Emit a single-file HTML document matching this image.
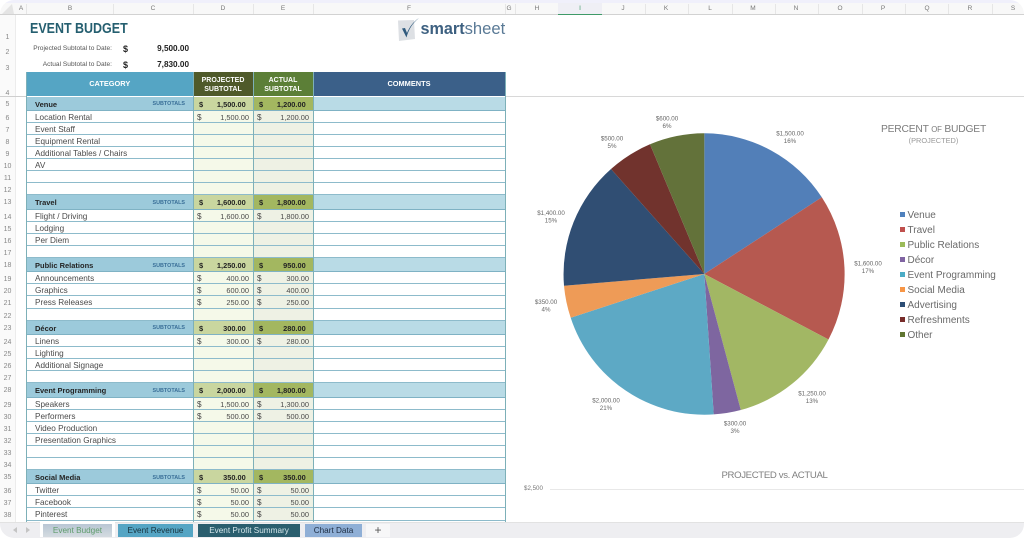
<!DOCTYPE html>
<html><head><meta charset="utf-8"><style>
html,body{margin:0;padding:0;background:#fff}
body{width:1024px;height:538px;overflow:hidden;font-family:"Liberation Sans",sans-serif}
#f{position:absolute;left:0;top:0;width:1024px;height:538px;filter:blur(.35px)}
#w{position:absolute;left:0;top:0;width:1024px;height:538px;background:#fff;border-radius:14px;overflow:hidden}
.a{position:absolute;white-space:nowrap}
.ch{position:absolute;top:3px;height:12px;line-height:12px;font-size:6.5px;color:#777;text-align:center;transform:translateX(-50%)}
.sp{position:absolute;top:4px;height:10px;width:1px;background:#e6e6e6}
.n{position:absolute;left:0;width:15px;text-align:center;font-size:7px;color:#888}
#rows{position:absolute;left:0;top:96.5px;width:505.5px}
.r{display:flex;height:12.02px;font-size:8.2px;color:#4a4a4a;line-height:13.4px}
.r>div{box-sizing:border-box;border-bottom:1px solid #8dbbcb;height:100%;position:relative}
.r>.g{width:15px;border:0;text-align:center;font-size:7px;font-weight:normal;color:#888;line-height:15px;background:#fafafa}
.r>.x{width:11.5px;border:0}
.r>.c{width:166.5px;padding-left:8.5px;background:#fff}
.r>.d{width:60px;background:#f5f9e9}
.r>.e{width:60px;background:#eef1e4}
.r>.o{width:192px;background:#fff}
.r i{position:absolute;left:4px;top:0;font-style:normal}
.r u{position:absolute;right:4px;top:0;text-decoration:none;font-size:7.4px}
.s{height:14.6px;font-weight:bold;color:#242424;line-height:15.4px;font-size:7.5px}
.s>div{border-bottom:1px solid #7fb2c4}
.s>.c{background:#9ccadb}
.s>.d{background:#c9d69f}
.s>.e{background:#a3b760}
.s>.o{background:#b9dbe6}
.s i{left:6px}.s u{right:7.3px}
.s em{position:absolute;right:8px;top:.8px;font-style:normal;font-size:5.4px;color:#3a6f98}
.v{position:absolute;top:72px;height:450px;width:1px;background:#7db0b8}
.hd{position:absolute;top:72px;height:24px;color:#fff;font-weight:bold;text-align:center;font-size:7.4px;box-sizing:border-box}
.t{position:absolute;top:524px;height:13px;line-height:13px;text-align:center;font-size:8.2px}
.l{position:absolute;left:907.5px;font-size:10px;color:#6a6a6a;height:12px;line-height:12px}
.q{position:absolute;left:900px;width:5px;height:5px}
svg text{font-family:"Liberation Sans",sans-serif;font-size:6.2px;fill:#666;text-anchor:middle}
</style></head><body><div id="f"><div id="w">
<div class="a" style="left:0;top:0;width:1024px;height:3px;background:#f0f0fb"></div>
<div class="a" style="left:0;top:3px;width:1024px;height:11px;background:#f8f8f8"></div>
<div class="a" style="left:0;top:14px;width:1024px;height:1px;background:#d2d2d2"></div>
<div class="a" style="left:558px;top:3px;width:44px;height:11px;background:#efeff5"></div>
<div class="a" style="left:558px;top:14px;width:44px;height:1px;background:#3f9a68"></div>
<svg class="a" style="left:0;top:0" width="16" height="15"><path d="M2 14 L12 4 L14 14Z" fill="#e4e4e4"/></svg>
<span class="ch" style="left:21px">A</span><span class="ch" style="left:70px">B</span><span class="ch" style="left:153px">C</span><span class="ch" style="left:223px">D</span><span class="ch" style="left:283px">E</span><span class="ch" style="left:409px">F</span><span class="ch" style="left:509px">G</span><span class="ch" style="left:537px">H</span><span class="ch" style="left:580px;color:#3f9a68">I</span><span class="ch" style="left:623px">J</span><span class="ch" style="left:666px">K</span><span class="ch" style="left:710px">L</span><span class="ch" style="left:753px">M</span><span class="ch" style="left:796px">N</span><span class="ch" style="left:840px">O</span><span class="ch" style="left:883px">P</span><span class="ch" style="left:927px">Q</span><span class="ch" style="left:970px">R</span><span class="ch" style="left:1013px">S</span>
<span class="sp" style="left:26px"></span><span class="sp" style="left:113px"></span><span class="sp" style="left:193px"></span><span class="sp" style="left:253px"></span><span class="sp" style="left:313px"></span><span class="sp" style="left:505px"></span><span class="sp" style="left:515px"></span><span class="sp" style="left:645px"></span><span class="sp" style="left:688px"></span><span class="sp" style="left:732px"></span><span class="sp" style="left:775px"></span><span class="sp" style="left:818px"></span><span class="sp" style="left:862px"></span><span class="sp" style="left:905px"></span><span class="sp" style="left:948px"></span><span class="sp" style="left:992px"></span>
<div class="a" style="left:0;top:15px;width:15px;height:507px;background:#fafafa;border-right:1px solid #ececec"></div>
<span class="n" style="top:33.500px">1</span><span class="n" style="top:48.500px">2</span><span class="n" style="top:64.500px">3</span><span class="n" style="top:89.500px">4</span>

<div class="a" style="left:30px;top:20px;font-size:14.500px;font-weight:bold;color:#255f70;line-height:18px;transform-origin:0 50%;transform:scaleX(.86)">EVENT BUDGET</div>
<div class="a" style="right:912px;top:45px;font-size:6.600px;color:#555;line-height:8px">Projected Subtotal to Date:</div>
<div class="a" style="right:912px;top:61px;font-size:6.600px;color:#555;line-height:8px">Actual Subtotal to Date:</div>
<div class="a" style="left:123px;top:44px;font-size:9px;font-weight:bold;color:#222;line-height:10px">$</div>
<div class="a" style="left:123px;top:60px;font-size:9px;font-weight:bold;color:#222;line-height:10px">$</div>
<div class="a" style="right:835px;top:44px;font-size:8.200px;font-weight:bold;color:#222;line-height:10px">9,500.00</div>
<div class="a" style="right:835px;top:60px;font-size:8.200px;font-weight:bold;color:#222;line-height:10px">7,830.00</div>

<svg class="a" style="left:396px;top:15px" width="26" height="28" viewBox="0 0 26 28"><path d="M2 5.500 L18 5 L19 24 L3 26Z" fill="#dde0e4"/><path d="M6 13.500 L10.500 22.500 C12.500 15 16 8.500 23 3 C17 7 13.500 12 11 18 L9 13Z" fill="#2f5a7d"/></svg>
<div class="a" style="left:420.500px;top:16px;font-size:16.600px;line-height:26px;color:#5a7a96"><span style="color:#3d6080;font-weight:bold;font-size:16.200px">smart</span>sheet</div>

<div class="hd" style="left:26.500px;width:166.500px;background:#55a5c4;line-height:23px">CATEGORY</div>
<div class="hd" style="left:193px;width:60px;background:#4f5a2a;padding-top:3.500px;line-height:9.500px;font-size:7px">PROJECTED<br>SUBTOTAL</div>
<div class="hd" style="left:253px;width:60px;background:#5c7f37;padding-top:3.500px;line-height:9.500px;font-size:7px">ACTUAL<br>SUBTOTAL</div>
<div class="hd" style="left:313px;width:192px;background:#3b6089;line-height:23px">COMMENTS</div>

<div id="rows">
<div class="r s"><div class="g">5</div><div class="x"></div><div class="c">Venue<em>SUBTOTALS</em></div><div class="d"><i>$</i><u>1,500.00</u></div><div class="e"><i>$</i><u>1,200.00</u></div><div class="o"></div></div>
<div class="r"><div class="g">6</div><div class="x"></div><div class="c">Location Rental</div><div class="d"><i>$</i><u>1,500.00</u></div><div class="e"><i>$</i><u>1,200.00</u></div><div class="o"></div></div>
<div class="r"><div class="g">7</div><div class="x"></div><div class="c">Event Staff</div><div class="d"></div><div class="e"></div><div class="o"></div></div>
<div class="r"><div class="g">8</div><div class="x"></div><div class="c">Equipment Rental</div><div class="d"></div><div class="e"></div><div class="o"></div></div>
<div class="r"><div class="g">9</div><div class="x"></div><div class="c">Additional Tables / Chairs</div><div class="d"></div><div class="e"></div><div class="o"></div></div>
<div class="r"><div class="g">10</div><div class="x"></div><div class="c">AV</div><div class="d"></div><div class="e"></div><div class="o"></div></div>
<div class="r"><div class="g">11</div><div class="x"></div><div class="c"></div><div class="d"></div><div class="e"></div><div class="o"></div></div>
<div class="r"><div class="g">12</div><div class="x"></div><div class="c"></div><div class="d"></div><div class="e"></div><div class="o"></div></div>
<div class="r s"><div class="g">13</div><div class="x"></div><div class="c">Travel<em>SUBTOTALS</em></div><div class="d"><i>$</i><u>1,600.00</u></div><div class="e"><i>$</i><u>1,800.00</u></div><div class="o"></div></div>
<div class="r"><div class="g">14</div><div class="x"></div><div class="c">Flight / Driving</div><div class="d"><i>$</i><u>1,600.00</u></div><div class="e"><i>$</i><u>1,800.00</u></div><div class="o"></div></div>
<div class="r"><div class="g">15</div><div class="x"></div><div class="c">Lodging</div><div class="d"></div><div class="e"></div><div class="o"></div></div>
<div class="r"><div class="g">16</div><div class="x"></div><div class="c">Per Diem</div><div class="d"></div><div class="e"></div><div class="o"></div></div>
<div class="r"><div class="g">17</div><div class="x"></div><div class="c"></div><div class="d"></div><div class="e"></div><div class="o"></div></div>
<div class="r s"><div class="g">18</div><div class="x"></div><div class="c">Public Relations<em>SUBTOTALS</em></div><div class="d"><i>$</i><u>1,250.00</u></div><div class="e"><i>$</i><u>950.00</u></div><div class="o"></div></div>
<div class="r"><div class="g">19</div><div class="x"></div><div class="c">Announcements</div><div class="d"><i>$</i><u>400.00</u></div><div class="e"><i>$</i><u>300.00</u></div><div class="o"></div></div>
<div class="r"><div class="g">20</div><div class="x"></div><div class="c">Graphics</div><div class="d"><i>$</i><u>600.00</u></div><div class="e"><i>$</i><u>400.00</u></div><div class="o"></div></div>
<div class="r"><div class="g">21</div><div class="x"></div><div class="c">Press Releases</div><div class="d"><i>$</i><u>250.00</u></div><div class="e"><i>$</i><u>250.00</u></div><div class="o"></div></div>
<div class="r"><div class="g">22</div><div class="x"></div><div class="c"></div><div class="d"></div><div class="e"></div><div class="o"></div></div>
<div class="r s"><div class="g">23</div><div class="x"></div><div class="c">Décor<em>SUBTOTALS</em></div><div class="d"><i>$</i><u>300.00</u></div><div class="e"><i>$</i><u>280.00</u></div><div class="o"></div></div>
<div class="r"><div class="g">24</div><div class="x"></div><div class="c">Linens</div><div class="d"><i>$</i><u>300.00</u></div><div class="e"><i>$</i><u>280.00</u></div><div class="o"></div></div>
<div class="r"><div class="g">25</div><div class="x"></div><div class="c">Lighting</div><div class="d"></div><div class="e"></div><div class="o"></div></div>
<div class="r"><div class="g">26</div><div class="x"></div><div class="c">Additional Signage</div><div class="d"></div><div class="e"></div><div class="o"></div></div>
<div class="r"><div class="g">27</div><div class="x"></div><div class="c"></div><div class="d"></div><div class="e"></div><div class="o"></div></div>
<div class="r s"><div class="g">28</div><div class="x"></div><div class="c">Event Programming<em>SUBTOTALS</em></div><div class="d"><i>$</i><u>2,000.00</u></div><div class="e"><i>$</i><u>1,800.00</u></div><div class="o"></div></div>
<div class="r"><div class="g">29</div><div class="x"></div><div class="c">Speakers</div><div class="d"><i>$</i><u>1,500.00</u></div><div class="e"><i>$</i><u>1,300.00</u></div><div class="o"></div></div>
<div class="r"><div class="g">30</div><div class="x"></div><div class="c">Performers</div><div class="d"><i>$</i><u>500.00</u></div><div class="e"><i>$</i><u>500.00</u></div><div class="o"></div></div>
<div class="r"><div class="g">31</div><div class="x"></div><div class="c">Video Production</div><div class="d"></div><div class="e"></div><div class="o"></div></div>
<div class="r"><div class="g">32</div><div class="x"></div><div class="c">Presentation Graphics</div><div class="d"></div><div class="e"></div><div class="o"></div></div>
<div class="r"><div class="g">33</div><div class="x"></div><div class="c"></div><div class="d"></div><div class="e"></div><div class="o"></div></div>
<div class="r"><div class="g">34</div><div class="x"></div><div class="c"></div><div class="d"></div><div class="e"></div><div class="o"></div></div>
<div class="r s"><div class="g">35</div><div class="x"></div><div class="c">Social Media<em>SUBTOTALS</em></div><div class="d"><i>$</i><u>350.00</u></div><div class="e"><i>$</i><u>350.00</u></div><div class="o"></div></div>
<div class="r"><div class="g">36</div><div class="x"></div><div class="c">Twitter</div><div class="d"><i>$</i><u>50.00</u></div><div class="e"><i>$</i><u>50.00</u></div><div class="o"></div></div>
<div class="r"><div class="g">37</div><div class="x"></div><div class="c">Facebook</div><div class="d"><i>$</i><u>50.00</u></div><div class="e"><i>$</i><u>50.00</u></div><div class="o"></div></div>
<div class="r"><div class="g">38</div><div class="x"></div><div class="c">Pinterest</div><div class="d"><i>$</i><u>50.00</u></div><div class="e"><i>$</i><u>50.00</u></div><div class="o"></div></div>
</div>
<div class="v" style="left:26px"></div><div class="v" style="left:193px"></div><div class="v" style="left:253px"></div><div class="v" style="left:313px"></div><div class="v" style="left:505px"></div>
<div class="a" style="left:0;top:96px;width:26px;height:1px;background:#cfcfcf"></div>
<div class="a" style="left:506px;top:96px;width:518px;height:1px;background:#d8d8d8"></div>

<svg class="a" style="left:0;top:0" width="1024" height="538">
<path d="M704.300 274V133.300A140.700 140.700 0 0 1 821.800 197.300Z" fill="#527fb8"/>
<path d="M704.300 274L821.800 197.300A140.700 140.700 0 0 1 828.500 339.500Z" fill="#b65950"/>
<path d="M704.300 274L828.500 339.500A140.700 140.700 0 0 1 740.800 410Z" fill="#a2b764"/>
<path d="M704.300 274L740.800 410A140.700 140.700 0 0 1 713.700 414.400Z" fill="#7e66a0"/>
<path d="M704.300 274L713.700 414.400A140.700 140.700 0 0 1 570.700 317.700Z" fill="#5da9c5"/>
<path d="M704.300 274L570.700 317.700A140.700 140.700 0 0 1 564 285.700Z" fill="#ee9b57"/>
<path d="M704.300 274L564 285.700A140.700 140.700 0 0 1 611 169Z" fill="#304e73"/>
<path d="M704.300 274L611 169A140.700 140.700 0 0 1 650 144.300Z" fill="#71332d"/>
<path d="M704.300 274L650 144.300A140.700 140.700 0 0 1 704.300 133.300Z" fill="#63723a"/>
<text x="790" y="135.500">$1,500.00</text><text x="790" y="143">16%</text>
<text x="868" y="265.500">$1,600.00</text><text x="868" y="273">17%</text>
<text x="812" y="395.500">$1,250.00</text><text x="812" y="403">13%</text>
<text x="735" y="425.500">$300.00</text><text x="735" y="433">3%</text>
<text x="606" y="402.500">$2,000.00</text><text x="606" y="410">21%</text>
<text x="546" y="304">$350.00</text><text x="546" y="311.500">4%</text>
<text x="551" y="215">$1,400.00</text><text x="551" y="222.500">15%</text>
<text x="612" y="140.500">$500.00</text><text x="612" y="148">5%</text>
<text x="667" y="120.500">$600.00</text><text x="667" y="128">6%</text>
</svg>

<div class="a" style="left:933.500px;top:122.500px;transform:translateX(-50%);font-size:10.300px;line-height:13px;color:#7c7c7c;letter-spacing:-.2px">PERCENT <span style="font-size:7.800px">OF</span> BUDGET</div>
<div class="a" style="left:933.500px;top:135.500px;transform:translateX(-50%);font-size:7.400px;line-height:10px;color:#999">(PROJECTED)</div>
<i class="q" style="top:211.700px;background:#4f81bd"></i><span class="l" style="top:209.500px">Venue</span>
<i class="q" style="top:226.700px;background:#c0504d"></i><span class="l" style="top:224.500px">Travel</span>
<i class="q" style="top:241.700px;background:#9bbb59"></i><span class="l" style="top:239.500px">Public Relations</span>
<i class="q" style="top:256.700px;background:#8064a2"></i><span class="l" style="top:254.500px">Décor</span>
<i class="q" style="top:271.700px;background:#4bacc6"></i><span class="l" style="top:269.500px">Event Programming</span>
<i class="q" style="top:286.700px;background:#f79646"></i><span class="l" style="top:284.500px">Social Media</span>
<i class="q" style="top:301.700px;background:#2c4d75"></i><span class="l" style="top:299.500px">Advertising</span>
<i class="q" style="top:316.700px;background:#772c2a"></i><span class="l" style="top:314.500px">Refreshments</span>
<i class="q" style="top:331.700px;background:#5f7530"></i><span class="l" style="top:329.500px">Other</span>

<div class="a" style="left:774.500px;top:469.500px;transform:translateX(-50%);font-size:9.600px;line-height:12px;color:#808080;letter-spacing:-.35px">PROJECTED vs. ACTUAL</div>
<div class="a" style="left:524px;top:485px;font-size:6.200px;line-height:8px;color:#777">$2,500</div>
<div class="a" style="left:550px;top:489px;width:474px;height:1px;background:#e8e8e8"></div>

<div class="a" style="left:0;top:522px;width:1024px;height:16px;background:#eeeef1;border-top:1px solid #e2e2e2;box-sizing:border-box"></div>
<div class="a" style="left:13px;top:527px;width:0;height:0;border:3.500px solid transparent;border-right:4px solid #c4c4c4;border-left:0"></div>
<div class="a" style="left:26px;top:527px;width:0;height:0;border:3.500px solid transparent;border-left:4px solid #c4c4c4;border-right:0"></div>
<div class="a" style="left:40px;top:522px;width:75px;height:15px;background:#fff"></div>
<div class="t" style="left:43px;width:69px;background:linear-gradient(#b9c6d4,#d4dbe0);color:#5f9c6c">Event Budget</div>
<div class="t" style="left:118px;width:75px;background:#55a5c4;color:#17323d">Event Revenue</div>
<div class="t" style="left:198px;width:102px;background:#2a5e6e;color:#d4e6ea">Event Profit Summary</div>
<div class="t" style="left:305px;width:57px;background:#8fafd6;color:#1c2b40">Chart Data</div>
<div class="t" style="left:366px;width:24px;background:#f7f7f8;color:#555;font-size:12px">+</div>
</div></div></body></html>
